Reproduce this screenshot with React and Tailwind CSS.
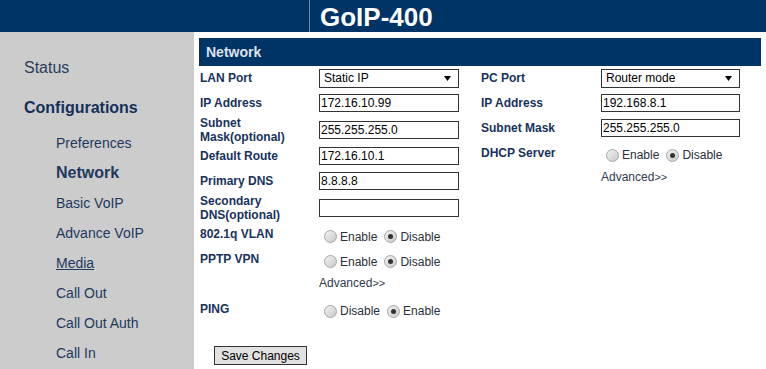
import React from "react";

const Label = ({ children, className = "" }) => (
  <div className={`w-[119px] shrink-0 text-[12px] font-bold leading-[14px] text-[#17325c] ${className}`}>
    {children}
  </div>
);

const RLabel = ({ children, className = "" }) => (
  <div className={`w-[120px] shrink-0 text-[12px] font-bold leading-[14px] text-[#17325c] ${className}`}>
    {children}
  </div>
);

const TextBox = ({ value, w = "w-[140px]" }) => (
  <input
    readOnly
    value={value}
    className={`${w} h-[18px] border border-[#333] bg-white px-[1px] text-[12px] leading-[16px] text-black outline-none font-['Liberation_Sans',Arial,sans-serif]`}
  />
);

const SelectBox = ({ value, w = "w-[140px]" }) => (
  <div className={`${w} h-[19px] border border-[#333] bg-white flex items-center justify-between pl-[4px] pr-[7px] text-[12px] text-black`}>
    <span>{value}</span>
    <svg width="7" height="5" viewBox="0 0 7 5">
      <polygon points="0,0 7,0 3.5,5" fill="#000" />
    </svg>
  </div>
);

const Radio = ({ checked, className = "" }) => (
  <span
    className={`inline-flex items-center justify-center w-[13px] h-[13px] rounded-full border border-[#a6a6a6] bg-linear-to-br from-[#f2f2f2] to-[#c9c9c9] shrink-0 ${className}`}
  >
    {checked && <span className="w-[5px] h-[5px] rounded-full bg-[#333]" />}
  </span>
);

const RadioPair = ({ a, b, checked }) => (
  <div className="flex items-center pt-[4px] text-[12px] text-[#2a2f3a]">
    <Radio checked={checked === 0} className="ml-[5px] mr-[3px]" />
    <span>{a}</span>
    <Radio checked={checked === 1} className="ml-[7px] mr-[3px]" />
    <span>{b}</span>
  </div>
);

const Advanced = () => (
  <span className="text-[12px] text-[#2f3a4e]">
    Advanced<span className="text-[11px]">&gt;&gt;</span>
  </span>
);

const SideItem = ({ children, className = "" }) => (
  <div className={`h-[30px] flex items-center pl-[56px] text-[14px] text-[#22395e] ${className}`}>{children}</div>
);

export default function App() {
  return (
    <div className="w-[766px] h-[369px] overflow-hidden flex flex-col bg-white font-['Liberation_Sans',Arial,sans-serif]">
      {/* Header */}
      <div className="h-[32px] shrink-0 bg-[#003366] flex">
        <div className="w-[309px] h-full" />
        <div className="w-[1px] h-full bg-[#7088aa]" />
        <div className="pl-[10px] pt-[2px] flex items-center text-[26px] font-bold text-white leading-none">
          GoIP-400
        </div>
      </div>

      <div className="flex flex-1">
        {/* Sidebar */}
        <aside className="w-[194px] shrink-0 bg-[#cccccc] pt-[21px]">
          <div className="h-[30px] flex items-center pl-[24px] text-[16px] text-[#2a3d5c]">Status</div>
          <div className="mt-[10px] h-[30px] flex items-center pl-[24px] text-[16px] font-bold text-[#13305a]">
            Configurations
          </div>
          <SideItem className="mt-[5px] h-[29px]">Preferences</SideItem>
          <SideItem className="text-[16px] font-bold text-[#13305a]">Network</SideItem>
          <SideItem>Basic VoIP</SideItem>
          <SideItem>Advance VoIP</SideItem>
          <SideItem>
            <span className="underline">Media</span>
          </SideItem>
          <SideItem>Call Out</SideItem>
          <SideItem>Call Out Auth</SideItem>
          <SideItem>Call In</SideItem>
        </aside>

        {/* Content */}
        <main className="flex-1 pt-[6px] px-[5px]">
          <div className="h-[28px] bg-[#003366] flex items-center pl-[7px] text-[14px] font-bold text-[#dfe3ea]">
            Network
          </div>

          <div className="flex pl-[1px]">
            {/* Left column */}
            <div className="w-[281px] shrink-0">
              <div className="h-[24px] flex items-center">
                <Label>LAN Port</Label>
                <SelectBox value="Static IP" />
              </div>
              <div className="h-[25px] flex items-center">
                <Label>IP Address</Label>
                <TextBox value="172.16.10.99" />
              </div>
              <div className="h-[29px] flex items-center">
                <Label>
                  Subnet
                  <br />
                  Mask(optional)
                </Label>
                <TextBox value="255.255.255.0" />
              </div>
              <div className="h-[24px] flex items-center">
                <Label>Default Route</Label>
                <TextBox value="172.16.10.1" />
              </div>
              <div className="h-[25px] flex items-center">
                <Label>Primary DNS</Label>
                <TextBox value="8.8.8.8" />
              </div>
              <div className="h-[29px] flex items-center">
                <Label>
                  Secondary
                  <br />
                  DNS(optional)
                </Label>
                <TextBox value="" />
              </div>
              <div className="h-[25px] flex items-center">
                <Label className="pb-[1px]">802.1q VLAN</Label>
                <RadioPair a="Enable" b="Disable" checked={1} />
              </div>
              <div className="h-[25px] flex items-center">
                <Label className="pb-[1px]">PPTP VPN</Label>
                <RadioPair a="Enable" b="Disable" checked={1} />
              </div>
              <div className="h-[22px] flex items-center">
                <div className="w-[119px] shrink-0" />
                <Advanced />
              </div>
              <div className="h-[30px] flex items-center">
                <Label className="pb-[1px]">PING</Label>
                <RadioPair a="Disable" b="Enable" checked={1} />
              </div>
            </div>

            {/* Right column */}
            <div className="flex-1">
              <div className="h-[24px] flex items-center">
                <RLabel>PC Port</RLabel>
                <SelectBox value="Router mode" w="w-[139px]" />
              </div>
              <div className="h-[25px] flex items-center">
                <RLabel>IP Address</RLabel>
                <TextBox value="192.168.8.1" w="w-[139px]" />
              </div>
              <div className="h-[25px] flex items-center">
                <RLabel>Subnet Mask</RLabel>
                <TextBox value="255.255.255.0" w="w-[139px]" />
              </div>
              <div className="h-[26px] flex items-center">
                <RLabel className="pb-[1px]">DHCP Server</RLabel>
                <RadioPair a="Enable" b="Disable" checked={1} />
              </div>
              <div className="h-[22px] flex items-center">
                <div className="w-[120px] shrink-0" />
                <Advanced />
              </div>
            </div>
          </div>

          <button className="mt-[22px] ml-[15px] w-[93px] h-[19px] border border-[#333] bg-[#e1e1e1] text-[12px] text-black leading-none font-['Liberation_Sans',Arial,sans-serif]">
            Save Changes
          </button>
        </main>
      </div>
    </div>
  );
}
